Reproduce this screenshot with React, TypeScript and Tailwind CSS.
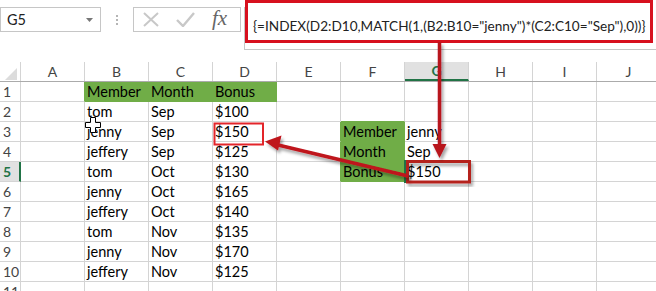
import React from 'react';

const cols = ['A', 'B', 'C', 'D', 'E', 'F', 'G', 'H', 'I', 'J'];
const GREEN = '#70ad47';

// sheet contents: row -> col -> [text, filled]
const data: Record<number, Record<string, [string, boolean]>> = {
  1: { B: ['Member', true], C: ['Month', true], D: ['Bonus', true] },
  2: { B: ['tom', false], C: ['Sep', false], D: ['$100', false] },
  3: { B: ['jenny', false], C: ['Sep', false], D: ['$150', false], F: ['Member', true], G: ['jenny', false] },
  4: { B: ['jeffery', false], C: ['Sep', false], D: ['$125', false], F: ['Month', true], G: ['Sep', false] },
  5: { B: ['tom', false], C: ['Oct', false], D: ['$130', false], F: ['Bonus', true], G: ['$150', false] },
  6: { B: ['jenny', false], C: ['Oct', false], D: ['$165', false] },
  7: { B: ['jeffery', false], C: ['Oct', false], D: ['$140', false] },
  8: { B: ['tom', false], C: ['Nov', false], D: ['$135', false] },
  9: { B: ['jenny', false], C: ['Nov', false], D: ['$170', false] },
  10: { B: ['jeffery', false], C: ['Nov', false], D: ['$125', false] },
};

const isFilled = (r: number, c: string) => !!data[r]?.[c]?.[1];

function Cell({ row, col, index }: { row: number; col: string; index: number }) {
  const cell = data[row]?.[col];
  const filled = isFilled(row, col);
  const next = cols[index + 1];
  const rightGreen = filled || (next ? isFilled(row, next) : false);
  const bottomGreen = filled || isFilled(row + 1, col);
  return (
    <div
      className="w-[64px] shrink-0 h-[20px] border-r border-b pl-[2px] leading-[20px] whitespace-nowrap overflow-visible text-[14.5px] text-black"
      style={{
        backgroundColor: filled ? GREEN : '#ffffff',
        borderRightColor: rightGreen ? GREEN : '#d4d4d4',
        borderBottomColor: bottomGreen ? GREEN : '#d4d4d4',
      }}
    >
      {cell ? cell[0] : ''}
    </div>
  );
}

function FormulaBar() {
  return (
    <div className="h-[62px] pt-[7px] flex items-start">
      <div className="w-[101px] shrink-0 h-[25px] border border-[#c6c6c6] flex items-center justify-between pl-[6px] pr-[7px]">
        <span className="text-[14.5px] text-[#222]">G5</span>
        <svg width="7" height="4" viewBox="0 0 7 4">
          <path d="M0 0 L7 0 L3.5 4 Z" fill="#777" />
        </svg>
      </div>
      <div className="w-[32px] shrink-0 h-[25px] flex flex-col items-center justify-center gap-[2px]">
        <span className="w-[2px] h-[2px] bg-[#b5b5b5]" />
        <span className="w-[2px] h-[2px] bg-[#b5b5b5]" />
        <span className="w-[2px] h-[2px] bg-[#b5b5b5]" />
      </div>
      <div className="w-[108px] shrink-0 h-[25px] border border-[#c6c6c6] flex items-center pl-[9px] gap-[17px]">
        <svg width="16" height="15" viewBox="0 0 16 15">
          <path d="M1 1 L15 14 M15 1 L1 14" stroke="#c8c8c8" strokeWidth="2" />
        </svg>
        <svg width="19" height="15" viewBox="0 0 19 15">
          <path d="M1 8 L7 14 L18 1" stroke="#c8c8c8" strokeWidth="2.4" fill="none" />
        </svg>
        <span className="font-['Liberation_Serif',serif] italic text-[21px] leading-none text-[#666] -mt-[2px]">fx</span>
      </div>
      <div className="ml-[3px] flex-1 min-w-0 overflow-hidden h-[43px] border-l border-b border-[#c6c6c6] pl-[8px] pt-[6px]">
        <span className="text-[13.6px] leading-[20px] text-[#222] whitespace-nowrap">
          {'{=INDEX(D2:D10,MATCH(1,(B2:B10="jenny")*(C2:C10="Sep"),0))}'}
        </span>
      </div>
    </div>
  );
}

function Overlay() {
  return (
    <svg className="absolute inset-0 pointer-events-none" width="656" height="291" viewBox="0 0 656 291">
      <defs>
        <filter id="sh" x="-20%" y="-20%" width="140%" height="140%">
          <feDropShadow dx="2" dy="3" stdDeviation="1.6" floodColor="#000" floodOpacity="0.35" />
        </filter>
      </defs>
      {/* formula box */}
      <rect x="246.5" y="1.5" width="405" height="40" fill="none" stroke="#d7101e" strokeWidth="3" />
      {/* D3 box */}
      <rect x="214.5" y="123.5" width="48.5" height="21" fill="none" stroke="#e3252a" strokeWidth="2" />
      {/* G5 selection */}
      <rect x="405" y="161" width="64" height="21" fill="none" stroke="#217346" strokeWidth="2" />
      {/* G5 red box */}
      <g filter="url(#sh)">
        <rect x="407.5" y="161.5" width="62" height="20.5" fill="none" stroke="#b5241f" strokeWidth="3" />
      </g>
      {/* vertical arrow */}
      <g filter="url(#sh)">
        <line x1="439.5" y1="42" x2="439.5" y2="146" stroke="#b8121a" strokeWidth="3.5" />
        <path d="M432.5 144 L446.5 144 L439.5 158 Z" fill="#b8121a" />
      </g>
      {/* left arrow */}
      <g filter="url(#sh)">
        <line x1="408" y1="176" x2="276" y2="144.5" stroke="#bf141c" strokeWidth="3.5" />
        <path d="M265 141.5 L281.5 135.5 L278 150.5 Z" fill="#bf141c" />
      </g>
      {/* cursor */}
      <path
        d="M90.5 117.5 H95.5 V122.5 H100.5 V127.5 H95.5 V132.5 H90.5 V127.5 H85.5 V122.5 H90.5 Z"
        fill="#fff"
        stroke="#000"
        strokeWidth="1"
      />
    </svg>
  );
}

export default function App() {
  const rows = [1, 2, 3, 4, 5, 6, 7, 8, 9, 10, 11];
  return (
    <div className="relative w-[656px] h-[291px] overflow-hidden bg-white font-['Lato',sans-serif]">
      <FormulaBar />

      <div className="flex h-[20px] border-b border-[#ababab]">
        <div className="w-[21px] shrink-0 border-r border-[#d4d4d4] relative">
          <svg className="absolute left-[5px] top-[6px]" width="12" height="12" viewBox="0 0 12 12">
            <path d="M12 0 L12 12 L0 12 Z" fill="#dcdcdc" />
          </svg>
        </div>
        {cols.map((c) =>
          c === 'G' ? (
            <div
              key={c}
              className="w-[64px] shrink-0 bg-[#e1e1e1] border-b-2 border-[#217346] border-r border-r-[#d4d4d4] text-center text-[14px] leading-[18px] font-bold text-[#217346]"
            >
              {c}
            </div>
          ) : (
            <div key={c} className="w-[64px] shrink-0 border-r border-[#d4d4d4] text-center text-[14px] leading-[19px] text-[#444]">
              {c}
            </div>
          )
        )}
      </div>

      {rows.map((r) => (
        <div key={r} className="flex">
          {r === 5 ? (
            <div className="w-[21px] shrink-0 h-[20px] bg-[#e1e1e1] border-r-2 border-[#217346] border-b border-b-[#d4d4d4] pl-[3px] text-[14px] leading-[20px] font-bold text-[#217346]">
              {r}
            </div>
          ) : (
            <div className="w-[21px] shrink-0 h-[20px] border-r border-b border-[#d4d4d4] pl-[3px] text-[14px] leading-[20px] text-[#444]">
              {r}
            </div>
          )}
          {cols.map((c, i) => (
            <Cell key={c} row={r} col={c} index={i} />
          ))}
        </div>
      ))}

      <Overlay />
    </div>
  );
}
